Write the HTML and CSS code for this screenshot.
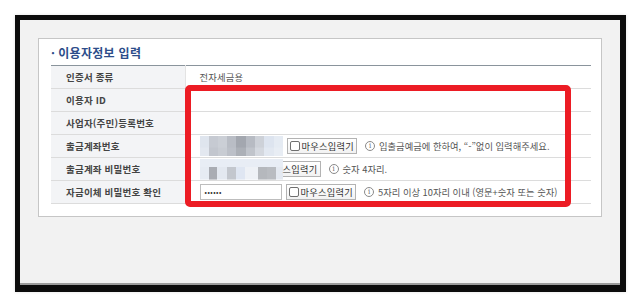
FILE: index.html
```html
<!DOCTYPE html>
<html lang="ko">
<head>
<meta charset="utf-8">
<link rel="stylesheet" href="styles.css">
</head>
<body>
<div class="frame">
  <div class="panel">
    <h2 class="title"><span class="dot">·</span>이용자정보 입력</h2>
    <table class="form">
      <tr><th>인증서 종류</th><td><span class="val">전자세금용</span></td></tr>
      <tr><th>이용자 ID</th><td></td></tr>
      <tr><th>사업자(주민)등록번호</th><td></td></tr>
      <tr><th>출금계좌번호</th><td>
        <div class="field">
          <div class="mosaic m1"></div>
          <span class="mbtn"><span class="chk"></span>마우스입력기</span>
          <span class="info">i</span>
          <span class="hint">입출금예금에 한하여, “-”없이 입력해주세요.</span>
        </div>
      </td></tr>
      <tr><th>출금계좌 비밀번호</th><td>
        <div class="field">
          <div class="mosaic m2"></div>
          <span class="mbtn cut">스입력기</span>
          <span class="info">i</span>
          <span class="hint">숫자 4자리.</span>
        </div>
      </td></tr>
      <tr><th>자금이체 비밀번호 확인</th><td>
        <div class="field">
          <span class="pw">••••••</span>
          <span class="mbtn"><span class="chk"></span>마우스입력기</span>
          <span class="info">i</span>
          <span class="hint">5자리 이상 10자리 이내 (영문+숫자 또는 숫자)</span>
        </div>
      </td></tr>
    </table>
  </div>
</div>
<div class="highlight"></div>
</body>
</html>
```

FILE: styles.css
```css
* { box-sizing: border-box; }
html, body { margin: 0; padding: 0; background: #fff; }
body {
  width: 640px;
  height: 307px;
  padding: 15px 0 0 15px;
  font-family: "Noto Sans CJK KR", "Noto Sans", sans-serif;
  position: relative;
  overflow: hidden;
}
.frame {
  width: 611px;
  height: 277px;
  border-style: solid;
  border-color: #0c0c0c;
  border-width: 5px 6px 7px 5px;
  background: #f2f2f2;
  box-shadow: inset 0 -2px 0 #9c9c9c, 0 0 3px rgba(0,0,0,0.12);
  padding: 18px 0 0 18px;
}
.panel {
  width: 564px;
  height: 179px;
  background: #fff;
  border: 1px solid #c6c6c6;
  padding: 7px 10px 0 12px;
}
.title {
  margin: 0;
  height: 19px;
  font-size: 12px;
  line-height: 14px;
  font-weight: 700;
  color: #2d4d8a;
  letter-spacing: 0.3px;
}
.dot { margin-right: 3px; }
.form {
  width: 540px;
  border-collapse: collapse;
  border-top: 1px solid #8a949c;
}
.form tr { height: 23px; border-bottom: 1px solid #dcdcdc; }
.form th {
  width: 134px;
  background: #f3f4f6;
  border-right: 1px solid #e3e3e3;
  text-align: left;
  padding: 0 0 0 15px;
  font-size: 9.5px;
  font-weight: 700;
  color: #444;
  letter-spacing: 0.2px;
}
.form td { padding: 0 0 0 14px; font-size: 9.3px; color: #555; }
.val { letter-spacing: 0.2px; }
.field { display: flex; align-items: center; height: 22px; }
.mosaic { width: 83px; height: 21px; }
.m1 {
  background:
    linear-gradient(to right, #dfe5ee 0 9px, #c6cad2 9px 18px, #cbcfd6 18px 27px, #b9bdc5 27px 36px, #a3a7af 36px 46px, #b7bbc3 46px 55px, #cdd1d8 55px 64px, #dde4ef 64px 74px, #e5ebf3 74px) top / 100% 55% no-repeat,
    linear-gradient(to right, #e3e8f0 0 9px, #c2c6ce 9px 18px, #c8ccd3 18px 27px, #bcc0c8 27px 36px, #acb0b7 36px 46px, #c0c4cb 46px 55px, #d4d8df 55px 64px, #e2e8f1 64px 74px, #e8edf4 74px) bottom / 100% 45% no-repeat;
}
.m2 {
  background:
    linear-gradient(to right, #e8edf5 0 83px) top / 100% 40% no-repeat,
    linear-gradient(to right, #e6ebf3 0 9px, #a9acb3 9px 17px, #e3e8f0 17px 27px, #c3c7ce 27px 36px, #dfe6f2 36px 45px, #eef1f6 45px 58px, #b5b8bd 58px 67px, #b9bcc1 67px 76px, #e4e9f1 76px) bottom / 100% 60% no-repeat;
}
.mbtn {
  display: flex;
  align-items: center;
  height: 16px;
  margin-left: 4px;
  padding: 0 2px 0 2px;
  border: 1px solid #b3b3b3;
  background: linear-gradient(#fff, #f2f2f2);
  font-size: 9.2px;
  color: #333;
  letter-spacing: 0.3px;
}
.mbtn.cut { margin-left: 0; border-left: none; padding-left: 0; }
.chk {
  width: 10px;
  height: 10px;
  border: 1px solid #6f6f6f;
  border-radius: 2px;
  background: #fff;
  margin-right: 2px;
}
.pw {
  width: 82px;
  height: 16px;
  border: 1px solid #bdbdbd;
  font-size: 7px;
  line-height: 14px;
  padding-left: 4px;
  color: #333;
  letter-spacing: 0.5px;
}
.info {
  width: 10px;
  height: 10px;
  border: 1px solid #8a8a8a;
  border-radius: 50%;
  margin-left: 8px;
  font-size: 7px;
  line-height: 8px;
  text-align: center;
  font-family: "DejaVu Serif", serif;
  color: #666;
}
.hint { margin-left: 4px; color: #555; }
.highlight {
  position: absolute;
  left: 185px;
  top: 85px;
  width: 386px;
  height: 122px;
  border: 6px solid #ec1c24;
  border-radius: 5px;
}
```
